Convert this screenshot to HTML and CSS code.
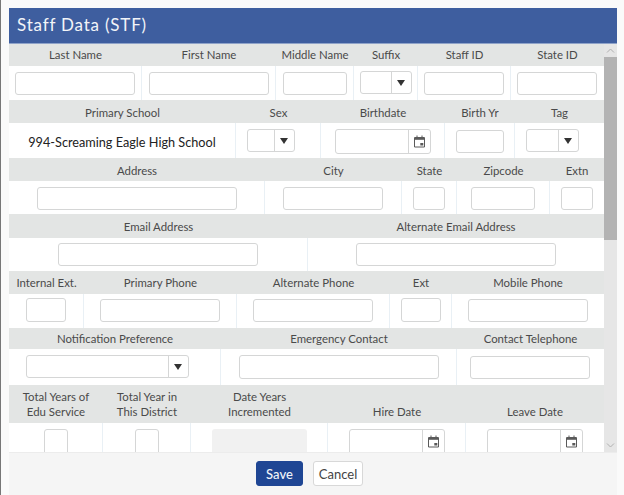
FILE: index.html
```html
<!DOCTYPE html>
<html lang="en">
<head>
<meta charset="utf-8">
<title>Staff Data (STF)</title>
<link rel="stylesheet" href="styles.css">
</head>
<body>
<svg class="defs" width="0" height="0" aria-hidden="true">
  <symbol id="cal" viewBox="0 0 12 13">
    <path d="M1 2.500h10v9.500H1z" fill="none" stroke="#5a5a5a" stroke-width="1"/>
    <path d="M1 3h10v1.800H1z" fill="#5a5a5a"/>
    <path d="M3.500 .5v2.500M8.500 .5v2.500" fill="none" stroke="#5a5a5a" stroke-width="1"/>
    <rect x="6.800" y="8" width="3" height="2.500" fill="#5a5a5a"/>
  </symbol>
</svg>
<main class="modal">
  <header class="title">Staff Data (STF)</header>
  <div class="body">
    <form class="form">
      <section class="row r1">
        <div class="lab">Last Name</div><div class="lab">First Name</div><div class="lab">Middle Name</div><div class="lab">Suffix</div><div class="lab">Staff ID</div><div class="lab">State ID</div>
        <div class="cell"><input class="w120"></div>
        <div class="cell"><input class="w120"></div>
        <div class="cell"><input class="w64"></div>
        <div class="cell"><div class="sel w52"><span></span><i></i></div></div>
        <div class="cell"><input class="w80"></div>
        <div class="cell"><input class="w80"></div>
      </section>
      <section class="row r2">
        <div class="lab">Primary School</div><div class="lab">Sex</div><div class="lab">Birthdate</div><div class="lab">Birth Yr</div><div class="lab">Tag</div>
        <div class="cell school">994-Screaming Eagle High School</div>
        <div class="cell"><div class="sel w48 shift"><span></span><i></i></div></div>
        <div class="cell"><div class="date w96"><span></span><svg><use href="#cal"/></svg></div></div>
        <div class="cell"><input class="w48"></div>
        <div class="cell"><div class="sel w53 shift"><span></span><i></i></div></div>
      </section>
      <section class="row r3">
        <div class="lab">Address</div><div class="lab">City</div><div class="lab">State</div><div class="lab">Zipcode</div><div class="lab">Extn</div>
        <div class="cell"><input class="w200"></div>
        <div class="cell"><input class="w100"></div>
        <div class="cell"><input class="w32"></div>
        <div class="cell"><input class="w64"></div>
        <div class="cell"><input class="w32"></div>
      </section>
      <section class="row r4">
        <div class="lab">Email Address</div><div class="lab">Alternate Email Address</div>
        <div class="cell"><input class="w200"></div>
        <div class="cell"><input class="w200"></div>
      </section>
      <section class="row r5">
        <div class="lab">Internal Ext.</div><div class="lab">Primary Phone</div><div class="lab">Alternate Phone</div><div class="lab">Ext</div><div class="lab">Mobile Phone</div>
        <div class="cell"><input class="w40 up"></div>
        <div class="cell"><input class="w120"></div>
        <div class="cell"><input class="w120"></div>
        <div class="cell"><input class="w40 up"></div>
        <div class="cell"><input class="w120"></div>
      </section>
      <section class="row r6">
        <div class="lab">Notification Preference</div><div class="lab">Emergency Contact</div><div class="lab">Contact Telephone</div>
        <div class="cell"><div class="sel w163 shift"><span></span><i></i></div></div>
        <div class="cell"><input class="w200 up"></div>
        <div class="cell"><input class="w120"></div>
      </section>
      <section class="row r7">
        <div class="lab">Total Years of<br>Edu Service</div><div class="lab">Total Year in<br>This District</div><div class="lab">Date Years<br>Incremented</div><div class="lab low">Hire Date</div><div class="lab low">Leave Date</div>
        <div class="cell"><input class="w24 tall"></div>
        <div class="cell"><input class="w24 tall"></div>
        <div class="cell"><div class="disabled"></div></div>
        <div class="cell"><div class="date w96"><span></span><svg><use href="#cal"/></svg></div></div>
        <div class="cell"><div class="date w96"><span></span><svg><use href="#cal"/></svg></div></div>
      </section>
    </form>
    <aside class="scrollbar">
      <div class="arrow"><svg width="9" height="5" viewBox="0 0 9 5"><path d="M1 4.500L4.500 1L8 4.500" fill="none" stroke="#b0b0b0"/></svg></div>
      <div class="thumb"></div>
      <div class="track"></div>
      <div class="arrow"><svg width="9" height="5" viewBox="0 0 9 5"><path d="M1 .5L4.500 4L8 .5" fill="none" stroke="#b0b0b0"/></svg></div>
    </aside>
  </div>
  <footer class="foot">
    <button type="button" class="btn save">Save</button>
    <button type="button" class="btn cancel">Cancel</button>
  </footer>
</main>
</body>
</html>
```
FILE: styles.css
```css
* { box-sizing: border-box; }
html, body { margin: 0; height: 100%; }
body {
  background: #fafafa;
  font-family: "Lato", "Liberation Sans", sans-serif;
  color: #4a4a4a;
  overflow: hidden;
  border-left: 1px solid #777;
  padding: 8px 7px 0 8px;
}
.defs { position: absolute; }
.modal { height: 487px; display: flex; flex-direction: column; background: #fff; }
.title {
  height: 36px;
  flex: none;
  background: #3e5e9f;
  border-bottom: 1px solid #8fa3c9;
  color: #f2f4f8;
  font-size: 17px;
  letter-spacing: .8px;
  line-height: 34px;
  padding-left: 8px;
}
.body { height: 408px; flex: none; display: flex; overflow: hidden; }
.form { flex: 1; min-width: 0; overflow: hidden; }
.row { display: grid; }
.lab {
  background: #e3e5e4;
  font-size: 11.4px;
  line-height: 15px;
  display: flex;
  align-items: center;
  justify-content: center;
  text-align: center;
  white-space: nowrap;
}
.lab.low { align-items: flex-end; padding-bottom: 4px; }
.r1 .lab { padding-bottom: 2px; }
.r2 .lab, .r3 .lab { padding-top: 2px; }
.cell {
  display: flex;
  align-items: flex-start;
  justify-content: center;
  border-right: 1px solid #e9f0f5;
  min-width: 0;
}
.cell:last-child { border-right-color: transparent; }
.school { font-size: 12.7px; color: #222; align-items: center; height: 100%; }

.r1 { grid-template-columns: 133px 134px 78px 64px 93px 93px; grid-template-rows: 22px 34px; }
.r2 { grid-template-columns: 227px 85px 124px 70px 89px; grid-template-rows: 23px 35px; }
.r3 { grid-template-columns: 256px 137px 55px 93px 54px; grid-template-rows: 23px 33px; }
.r4 { grid-template-columns: 299px 296px; grid-template-rows: 24px 33px; }
.r5 { grid-template-columns: 75px 153px 153px 62px 152px; grid-template-rows: 23px 34px; }
.r6 { grid-template-columns: 212px 236px 147px; grid-template-rows: 21px 36px; }
.r7 { grid-template-columns: 94px 88px 137px 138px 138px; grid-template-rows: 38px 30px; }

.r1 .cell, .r3 .cell, .r7 .cell { padding-top: 6px; }
.r2 .cell, .r6 .cell { padding-top: 7px; }
.r4 .cell, .r5 .cell { padding-top: 5px; }
.r2 .school { padding-top: 2px; }

input, .sel, .date, .disabled { display: block; flex: none; }
input, .sel, .date {
  height: 23px;
  border: 1px solid #d5d6d6;
  border-radius: 3px;
  background: #fff;
  padding: 0;
  margin: 0;
}
input.up { margin-top: -1px; height: 24px; }
input.tall { height: 30px; }
.sel, .date { display: flex; margin-top: -1px; }
.date { height: 25px; }
.r7 .date { margin-top: 0; height: 30px; }
.shift { margin-right: 14px; }
.sel span, .date span { flex: 1; }
.sel i {
  width: 20px;
  border-left: 1px solid #d5d6d6;
  position: relative;
  flex: none;
}
.sel i::after {
  content: "";
  position: absolute;
  left: 5px;
  top: 8px;
  border-style: solid;
  border-width: 6px 4px 0;
  border-color: #333 transparent transparent;
}
.date svg {
  width: 22px;
  height: 23px;
  flex: none;
  border-left: 1px solid #d5d6d6;
  padding: 5px 4px;
}
.disabled { width: 95px; background: #f1f1f1; border-radius: 3px; height: 30px; }
.w24 { width: 24px; }
.w32 { width: 32px; }
.w40 { width: 40px; }
.w48 { width: 48px; }
.w52 { width: 52px; }
.w53 { width: 53px; }
.w64 { width: 64px; }
.w80 { width: 80px; }
.w96 { width: 96px; }
.w100 { width: 100px; }
.w120 { width: 120px; }
.w163 { width: 163px; }
.w200 { width: 200px; }

.scrollbar { width: 13px; flex: none; background: #e6e6e6; display: flex; flex-direction: column; }
.arrow { height: 13px; flex: none; display: flex; align-items: center; justify-content: center; }
.thumb { height: 183px; flex: none; background: #b3b3b3; }
.track { flex: 1; }

.foot {
  flex: 1;
  background: #f5f5f5;
  border-top: 1px solid #ececec;
  display: flex;
  justify-content: center;
  align-items: center;
  gap: 10px;
  padding: 0 7px 1px 0;
}
.btn {
  height: 25px;
  border-radius: 3px;
  font-family: inherit;
  font-size: 13px;
  padding: 0;
}
.save { width: 47px; background: #1f4694; border: 1px solid #1f4694; color: #f0f3f8; font-weight: 500; }
.cancel { width: 50px; background: #fff; border: 1px solid #d8d8d8; color: #444; }
```
